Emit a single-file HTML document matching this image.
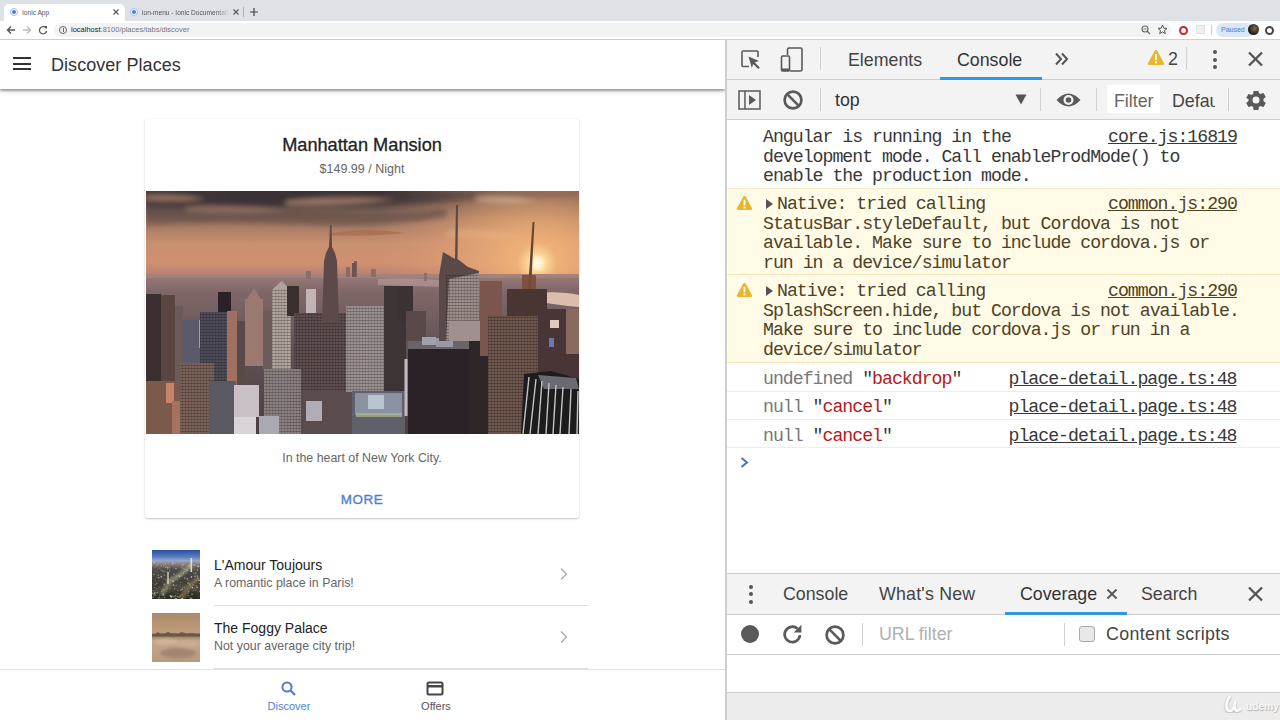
<!DOCTYPE html>
<html><head><meta charset="utf-8">
<style>
*{margin:0;padding:0;box-sizing:border-box}
html,body{width:1280px;height:720px;overflow:hidden;background:#fff;font-family:"Liberation Sans",sans-serif;position:relative}
.a{position:absolute}
.t{position:absolute;white-space:nowrap;line-height:1}
.mono{font-family:"Liberation Mono",monospace}
</style></head><body>

<!-- CHROME TAB STRIP -->
<div class="a" style="left:0;top:0;width:1280px;height:21px;background:#dee1e6"></div>
<div class="a" style="left:4px;top:4px;width:121px;height:18px;background:#fff;border-radius:5px 5px 0 0"></div>
<div class="a" style="left:10px;top:8px;width:8px;height:8px;border-radius:50%;border:1.5px solid #9ec0f5;background:#fff"></div>
<div class="a" style="left:12px;top:10px;width:4px;height:4px;border-radius:50%;background:#4a7ad8"></div>
<div class="t" style="left:22px;top:9.5px;font-size:6.6px;color:#555">Ionic App</div>
<svg class="a" style="left:113px;top:9px" width="6" height="6" viewBox="0 0 6 6"><path d="M.5 .5 L5.5 5.5 M5.5 .5 L.5 5.5" stroke="#555" stroke-width="1.1"/></svg>
<div class="a" style="left:130px;top:8px;width:8px;height:8px;border-radius:50%;border:1.5px solid #9ec0f5;background:#fff"></div>
<div class="a" style="left:132px;top:10px;width:4px;height:4px;border-radius:50%;background:#4a7ad8"></div>
<div class="t" style="left:142px;top:9.5px;font-size:6.6px;color:#555;width:87px;overflow:hidden;-webkit-mask-image:linear-gradient(90deg,#000 85%,transparent)">ion-menu - Ionic Documentation</div>
<svg class="a" style="left:233px;top:9px" width="6" height="6" viewBox="0 0 6 6"><path d="M.5 .5 L5.5 5.5 M5.5 .5 L.5 5.5" stroke="#555" stroke-width="1.1"/></svg>
<div class="a" style="left:243px;top:7px;width:1px;height:10px;background:#b0b0b0"></div>
<svg class="a" style="left:250px;top:8px" width="8" height="8" viewBox="0 0 8 8"><path d="M4 0 V8 M0 4 H8" stroke="#444" stroke-width="1.2"/></svg>

<!-- ADDRESS BAR -->
<div class="a" style="left:0;top:21px;width:1280px;height:18px;background:#fff"></div>
<div class="a" style="left:0;top:39px;width:1280px;height:1px;background:#d0d0d0"></div>
<div class="a" style="left:54px;top:23px;width:1117px;height:14px;border-radius:7px;background:#f1f3f4"></div>
<svg class="a" style="left:6px;top:25px" width="10" height="10" viewBox="0 0 10 10"><path d="M9 5 H1.8 M5 1.5 L1.5 5 L5 8.5" fill="none" stroke="#555" stroke-width="1.4"/></svg>
<svg class="a" style="left:22px;top:25px" width="10" height="10" viewBox="0 0 10 10"><path d="M1 5 H8.2 M5 1.5 L8.5 5 L5 8.5" fill="none" stroke="#bbb" stroke-width="1.3"/></svg>
<svg class="a" style="left:38px;top:25px" width="10" height="10" viewBox="0 0 10 10"><path d="M8 3.2 A3.6 3.6 0 1 0 8.6 6" fill="none" stroke="#555" stroke-width="1.3"/><path d="M6 1 H9 V4Z" fill="#555"/></svg>
<div class="a" style="left:59px;top:26px;width:8px;height:8px;border-radius:50%;border:1px solid #666"></div>
<div class="a" style="left:62.5px;top:29px;width:1px;height:3px;background:#666"></div>
<div class="a" style="left:62.5px;top:27.6px;width:1px;height:1px;background:#666"></div>
<div class="t" style="left:71px;top:26.3px;font-size:7.5px;color:#222">localhost<span style="color:#777">:8100/places/tabs/discover</span></div>
<svg class="a" style="left:1141px;top:25px" width="10" height="10" viewBox="0 0 10 10"><circle cx="4" cy="4" r="3" fill="none" stroke="#666" stroke-width="1.1"/><path d="M6 6 L9 9" stroke="#666" stroke-width="1.3"/><path d="M2.5 4 H5.5" stroke="#666" stroke-width=".9"/></svg>
<svg class="a" style="left:1157px;top:24px" width="11" height="11" viewBox="0 0 11 11"><path d="M5.5 1 L6.8 4.2 L10 4.4 L7.5 6.5 L8.3 9.7 L5.5 7.9 L2.7 9.7 L3.5 6.5 L1 4.4 L4.2 4.2Z" fill="none" stroke="#555" stroke-width="1"/></svg>
<div class="a" style="left:1179px;top:25.5px;width:8.5px;height:9px;border-radius:50%;border:2.2px solid #c82838"></div>
<div class="a" style="left:1196px;top:25px;width:9px;height:9px;background:#f0f0f0;border:1px solid #e2e2e2"></div>
<div class="a" style="left:1211px;top:25px;width:1px;height:10px;background:#ccc"></div>
<div class="a" style="left:1216px;top:23px;width:38px;height:14px;border-radius:7px;background:#dbe6f8"></div>
<div class="t" style="left:1221px;top:26px;font-size:7px;color:#4a7ad8">Paused</div>
<div class="a" style="left:1248px;top:24px;width:11px;height:11px;border-radius:50%;background:radial-gradient(circle at 60% 40%,#8a6a48,#1a140e 70%)"></div>
<div class="a" style="left:1265px;top:25.5px;width:9px;height:9px;border-radius:50%;border:2.6px solid #444"></div>

<!-- APP -->
<div class="a" style="left:0;top:40px;width:725px;height:680px;background:#fff"></div>
<div class="a" style="left:0;top:40px;width:725px;height:48.5px;background:#fff;box-shadow:0 1.5px 2px rgba(0,0,0,.32),0 3px 6px rgba(0,0,0,.1)"></div>
<div class="a" style="left:13px;top:57px;width:18px;height:2px;background:#333"></div>
<div class="a" style="left:13px;top:63px;width:18px;height:2px;background:#333"></div>
<div class="a" style="left:13px;top:68px;width:18px;height:2px;background:#333"></div>
<div class="t" style="left:51px;top:56px;font-size:18px;letter-spacing:0.05px;color:#333">Discover Places</div>

<!-- card -->
<div class="a" style="left:145px;top:119px;width:434px;height:399px;background:#fff;border-radius:2px;box-shadow:0 1px 2px rgba(0,0,0,.22),0 0 1px rgba(0,0,0,.12)"></div>
<div class="t" style="left:145px;top:135.5px;width:434px;text-align:center;font-size:18.2px;-webkit-text-stroke:0.3px #222;color:#222">Manhattan Mansion</div>
<div class="t" style="left:145px;top:163px;width:434px;text-align:center;font-size:12.5px;color:#666">$149.99 / Night</div>
<svg class="a" style="left:146px;top:191px" width="433" height="243" viewBox="0 0 433 243">
 <defs>
  <linearGradient id="sky" x1="0" y1="0" x2="0" y2="84" gradientUnits="userSpaceOnUse">
   <stop offset="0" stop-color="#3e3436"/>
   <stop offset="0.15" stop-color="#5a4a46"/>
   <stop offset="0.38" stop-color="#a07862"/>
   <stop offset="0.62" stop-color="#c89070"/>
   <stop offset="0.86" stop-color="#d09072"/>
   <stop offset="1" stop-color="#b88070"/>
  </linearGradient>
  <radialGradient id="sun" cx="391" cy="72" r="170" gradientUnits="userSpaceOnUse">
   <stop offset="0" stop-color="#fff6d8" stop-opacity="1"/>
   <stop offset="0.04" stop-color="#ffe0a0" stop-opacity="1"/>
   <stop offset="0.12" stop-color="#f8b878" stop-opacity=".8"/>
   <stop offset="0.45" stop-color="#eaa676" stop-opacity=".55"/>
   <stop offset="1" stop-color="#d09070" stop-opacity="0"/>
  </radialGradient>
  <linearGradient id="haze" x1="0" y1="84" x2="0" y2="243" gradientUnits="userSpaceOnUse">
   <stop offset="0" stop-color="#9a7a78"/>
   <stop offset="0.1" stop-color="#806868"/>
   <stop offset="0.45" stop-color="#625256"/>
   <stop offset="1" stop-color="#4a3e42"/>
  </linearGradient>
  <pattern id="win" width="3" height="3" patternUnits="userSpaceOnUse"><rect width="3" height="1" fill="#000" opacity=".22"/><rect width="1" height="3" fill="#000" opacity=".12"/></pattern>
  <linearGradient id="topband" x1="0" y1="0" x2="433" y2="0" gradientUnits="userSpaceOnUse">
   <stop offset="0" stop-color="#3a3034" stop-opacity=".9"/>
   <stop offset="0.55" stop-color="#3a3034" stop-opacity=".8"/>
   <stop offset="0.8" stop-color="#4a3a36" stop-opacity=".35"/>
   <stop offset="1" stop-color="#5a4438" stop-opacity=".2"/>
  </linearGradient>
  <filter id="bl"><feGaussianBlur stdDeviation="0.5"/></filter>
  <filter id="bl2"><feGaussianBlur stdDeviation="2.5"/></filter>
 </defs>
 <rect width="433" height="90" fill="url(#sky)"/>
 <rect width="433" height="90" fill="url(#sun)"/>
 <g filter="url(#bl2)">
  <path d="M0 0 H433 V6 Q340 8 280 12 Q150 18 0 14Z" fill="url(#topband)"/>
  <path d="M0 12 Q100 18 200 22 Q260 24 300 18 L300 26 Q230 38 160 34 Q80 30 0 34Z" fill="#54443f" opacity=".5"/>
  <path d="M0 4 Q30 2 60 8 Q30 12 0 9Z" fill="#a8806c" opacity=".8"/>
  <path d="M40 16 Q80 12 140 20 Q90 24 40 20Z" fill="#9a7866" opacity=".7"/>
  <path d="M140 10 Q180 4 250 8 Q200 16 140 14Z" fill="#b89078" opacity=".7"/>
  <path d="M330 6 Q360 3 390 10 Q360 14 330 10Z" fill="#e8c8a8" opacity=".5"/>
  <path d="M300 40 Q340 36 380 45 Q340 50 300 45Z" fill="#f0b888" opacity=".4"/>
 </g>
 <path d="M185 42 Q220 36 260 42 Q220 46 185 44Z" fill="#a86448" opacity=".55" filter="url(#bl)"/>
 <circle cx="391" cy="72" r="6" fill="#fff8e0" filter="url(#bl2)"/>
 <!-- haze city -->
 <rect y="83" width="433" height="160" fill="url(#haze)"/>
 <g filter="url(#bl)">
 <path d="M0 83 H433 V87 H0Z" fill="#b08a80" opacity=".5"/>
 <path d="M232 88 Q270 86 300 90 L300 96 Q260 95 232 94Z" fill="#c0a0a0" opacity=".55"/>
 <path d="M390 102 Q415 100 433 104 L433 116 Q410 114 390 110Z" fill="#e6c6b6" opacity=".9"/>
 <!-- small far skyline bumps -->
 <rect x="200" y="76" width="4" height="10" fill="#8a6a66"/><rect x="208" y="70" width="3" height="16" fill="#7a5e5c"/>
 <rect x="160" y="80" width="5" height="8" fill="#8a6e6a"/><rect x="225" y="78" width="5" height="8" fill="#8a6e6a"/>
 <rect x="278" y="82" width="3" height="8" fill="#8a6e6a"/>
 <!-- left -->
 <rect x="0" y="103" width="15" height="90" fill="#3a2e2e"/>
 <rect x="15" y="104" width="14" height="88" fill="#5a4440"/>
 <rect x="29" y="115" width="8" height="75" fill="#6a5a5a"/>
 <rect x="37" y="129" width="23" height="46" fill="#5a5a6a"/>
 <rect x="53" y="129" width="7" height="28" fill="#a8a0a8"/>
 <rect x="54" y="121" width="28" height="80" fill="#4e4c58"/>
 <rect x="54" y="121" width="28" height="80" fill="url(#win)"/>
 <rect x="72" y="101" width="13" height="20" fill="#2a2428"/>
 <rect x="81" y="120" width="10" height="80" fill="#a07060"/>
 <rect x="91" y="130" width="8" height="70" fill="#5a4a4a"/>
 <rect x="99" y="108" width="18" height="67" fill="#9a7a70"/>
 <path d="M101 108 L108 97 L115 108Z" fill="#9a7a70"/>
 <rect x="117" y="120" width="9" height="60" fill="#6a5a58"/>
 <rect x="126" y="98" width="19" height="80" fill="#b0a49a"/>
 <path d="M127 98 L135.5 90 L144 98Z" fill="#b0a49a"/>
 <rect x="126" y="98" width="19" height="80" fill="url(#win)"/>
 <rect x="141" y="95" width="12" height="30" fill="#3a2e2e"/>
 <rect x="160" y="98" width="10" height="24" fill="#c0b4b4"/>
 <rect x="148" y="122" width="52" height="78" fill="#5e4e4e"/>
 <rect x="148" y="122" width="52" height="78" fill="url(#win)"/>
 <rect x="0" y="190" width="35" height="53" fill="#7a5a4e"/>
 <rect x="20" y="192" width="8" height="20" fill="#c8846a"/>
 <rect x="26" y="210" width="8" height="33" fill="#a8705e"/>
 <rect x="34" y="172" width="34" height="71" fill="#7a6258"/>
 <rect x="34" y="172" width="34" height="71" fill="url(#win)"/>
 <rect x="63" y="190" width="27" height="53" fill="#5a5860"/>
 <rect x="88" y="194" width="25" height="32" fill="#c8c0c4"/>
 <rect x="88" y="226" width="22" height="17" fill="#d8d4d8"/>
 <rect x="118" y="178" width="37" height="65" fill="#8a8080"/>
 <rect x="118" y="178" width="37" height="65" fill="url(#win)"/>
 <rect x="113" y="225" width="20" height="18" fill="#aaa8b0"/>
 <rect x="155" y="200" width="51" height="43" fill="#5a4c4e"/>
 <rect x="160" y="210" width="16" height="20" fill="#b0acb8"/>
 <!-- ESB -->
 <path d="M184 34 L185.5 34 L186 56 L189 62 L191 70 L193 132 L176 132 L178 70 L180 62 L183 56Z" fill="#5c4a4a"/>
 <rect x="206" y="72" width="4" height="14" fill="#6e5252"/>
 <!-- center gray -->
 <rect x="200" y="115" width="40" height="86" fill="#9a9090"/>
 <rect x="200" y="115" width="40" height="86" fill="url(#win)"/>
 <rect x="238" y="95" width="22" height="105" fill="#3e3436"/>
 <rect x="253" y="95" width="14" height="40" fill="#3a3032"/>
 <rect x="260" y="120" width="20" height="30" fill="#5a4a4a"/>
 <rect x="206" y="200" width="53" height="43" fill="#60606a"/>
 <rect x="209" y="202" width="47" height="22" fill="#8a92a2"/>
 <rect x="222" y="204" width="16" height="14" fill="#b8c4d0"/>
 <rect x="210" y="222" width="46" height="4" fill="#b0b890" opacity=".7"/>
 <rect x="258.5" y="168" width="3" height="57" fill="#c0bcc0"/>
 <!-- dark center right -->
 <rect x="262" y="152" width="68" height="91" fill="#2a2426"/>
 <rect x="262" y="150" width="68" height="8" fill="#6a6468"/>
 <rect x="276" y="146" width="14" height="8" fill="#a0a0aa"/>
 <rect x="290" y="147" width="17" height="9" fill="#9a9aa6"/>
 <rect x="323" y="150" width="20" height="93" fill="#2e2628"/>
 <!-- BoA -->
 <path d="M310 14 L312 14 L311.5 68 L322 76 L333 80 L333 150 L293 150 L293 85 L297 61 L309 68Z" fill="#5a4a4a"/>
 <path d="M303 88 L333 82 L333 140 L300 150Z" fill="#9c8c8a"/>
 <rect x="300" y="84" width="33" height="66" fill="url(#win)"/>
 <rect x="303" y="130" width="37" height="20" fill="#a09090"/>
 <rect x="334" y="90" width="22" height="75" fill="#7a5650"/>
 <!-- crane tower -->
 <path d="M386.5 31 L388.5 31 L385 98 L382 98Z" fill="#6a4434"/>
 <rect x="376" y="84" width="14" height="14" fill="#7a4c3a" opacity=".85"/>
 <rect x="361" y="98" width="40" height="30" fill="#4a3432"/>
 <rect x="342" y="125" width="50" height="118" fill="#6e564e"/>
 <rect x="342" y="125" width="50" height="118" fill="url(#win)"/>
 <rect x="392" y="118" width="41" height="72" fill="#4a3634"/>
 <rect x="420" y="118" width="13" height="45" fill="#8a6a60"/>
 <rect x="404" y="129" width="9" height="8" fill="#e0c8c0"/>
 <rect x="403" y="147" width="5" height="9" fill="#6a7ab0"/>
 <!-- striped building -->
 <path d="M378 183 L405 180 L433 188 V243 H375Z" fill="#1e1a1c"/>
 <path d="M392 184 L430 187 L433 198 L398 198Z" fill="#6a6a72"/>
 </g>
 <g stroke="#c4c4c8" stroke-width="1.4">
  <line x1="383" y1="186" x2="377" y2="243"/><line x1="390" y1="188" x2="384" y2="243"/>
  <line x1="396" y1="190" x2="392" y2="243"/><line x1="403" y1="192" x2="400" y2="243"/>
  <line x1="410" y1="194" x2="407" y2="243"/><line x1="417" y1="196" x2="414" y2="243"/>
  <line x1="425" y1="198" x2="423" y2="243"/><line x1="432" y1="200" x2="431" y2="243"/>
 </g>
</svg>
<div class="t" style="left:145px;top:452px;width:434px;text-align:center;font-size:12.4px;color:#666">In the heart of New York City.</div>
<div class="t" style="left:145px;top:493px;width:434px;text-align:center;font-size:13.4px;-webkit-text-stroke:0.35px #4d7fd1;letter-spacing:0.55px;color:#4d7fd1">MORE</div>

<!-- list -->
<svg class="a" style="left:152px;top:550px" width="48" height="49" viewBox="0 0 48 49">
 <defs><linearGradient id="p1" x1="0" y1="0" x2="0" y2="1">
  <stop offset="0" stop-color="#2a50a0"/><stop offset=".14" stop-color="#5a7cc0"/><stop offset=".22" stop-color="#9aa8c8"/><stop offset=".28" stop-color="#8a8088"/><stop offset=".4" stop-color="#4e4c48"/><stop offset="1" stop-color="#2e2c28"/></linearGradient>
  <filter id="pb"><feGaussianBlur stdDeviation="0.45"/></filter>
  <filter id="pb2"><feGaussianBlur stdDeviation="1.2"/></filter></defs>
 <rect width="48" height="49" fill="url(#p1)"/>
 <g filter="url(#pb2)">
  <path d="M8 44 L16 30 L28 22 L38 14 L41 17 L30 26 L19 34 L12 46Z" fill="#c8d0a8" opacity=".45"/>
  <path d="M26 48 L36 34 L46 26 L48 30 L40 36 L32 49Z" fill="#c8a060" opacity=".4"/>
  <path d="M0 40 Q20 30 48 36 L48 42 Q20 38 0 46Z" fill="#707060" opacity=".35"/>
 </g>
 <g filter="url(#pb)"><circle cx="15.5" cy="17.6" r="0.6" fill="#e8e0a0" opacity="0.76"/><circle cx="4.5" cy="33.6" r="0.8" fill="#f0e8c0" opacity="0.37"/><circle cx="20.8" cy="14.6" r="0.3" fill="#ffffff" opacity="0.38"/><circle cx="27.1" cy="47.1" r="0.6" fill="#b0c0a0" opacity="0.82"/><circle cx="27.7" cy="26.7" r="0.8" fill="#e8e0a0" opacity="0.63"/><circle cx="6.4" cy="27.5" r="0.6" fill="#b0c0a0" opacity="0.50"/><circle cx="39.2" cy="18.7" r="0.6" fill="#d0a060" opacity="0.44"/><circle cx="4.7" cy="38.3" r="0.6" fill="#b0c0a0" opacity="0.45"/><circle cx="32.7" cy="27.8" r="0.5" fill="#b0c0a0" opacity="0.81"/><circle cx="17.4" cy="21.2" r="0.4" fill="#f0e8c0" opacity="0.39"/><circle cx="14.4" cy="30.3" r="0.5" fill="#ffffff" opacity="0.49"/><circle cx="47.0" cy="16.4" r="0.5" fill="#c8b070" opacity="0.43"/><circle cx="23.5" cy="13.5" r="0.6" fill="#b0c0a0" opacity="0.64"/><circle cx="42.0" cy="23.6" r="0.6" fill="#b0c0a0" opacity="0.60"/><circle cx="38.3" cy="14.5" r="0.3" fill="#c8b070" opacity="0.59"/><circle cx="31.9" cy="14.2" r="0.7" fill="#d0a060" opacity="0.64"/><circle cx="32.7" cy="28.5" r="0.7" fill="#d0a060" opacity="0.52"/><circle cx="45.2" cy="25.2" r="0.6" fill="#ffffff" opacity="0.38"/><circle cx="36.9" cy="16.8" r="0.4" fill="#ffffff" opacity="0.81"/><circle cx="23.8" cy="18.2" r="0.5" fill="#c8b070" opacity="0.79"/><circle cx="39.3" cy="44.0" r="0.4" fill="#ffffff" opacity="0.84"/><circle cx="32.8" cy="26.1" r="0.4" fill="#e8e0a0" opacity="0.44"/><circle cx="11.1" cy="20.6" r="0.5" fill="#b0c0a0" opacity="0.44"/><circle cx="13.5" cy="17.4" r="0.6" fill="#b0c0a0" opacity="0.63"/><circle cx="45.7" cy="37.5" r="0.6" fill="#b0c0a0" opacity="0.68"/><circle cx="35.5" cy="28.9" r="0.7" fill="#d0a060" opacity="0.75"/><circle cx="18.8" cy="26.8" r="0.4" fill="#d0a060" opacity="0.55"/><circle cx="9.1" cy="48.4" r="0.5" fill="#e8e0a0" opacity="0.52"/><circle cx="2.5" cy="12.0" r="0.4" fill="#e8e0a0" opacity="0.82"/><circle cx="29.5" cy="14.6" r="0.4" fill="#ffffff" opacity="0.42"/><circle cx="12.1" cy="24.9" r="0.5" fill="#e8e0a0" opacity="0.41"/><circle cx="23.4" cy="48.2" r="0.5" fill="#c8b070" opacity="0.39"/><circle cx="4.9" cy="24.7" r="0.4" fill="#d0a060" opacity="0.43"/><circle cx="1.1" cy="47.2" r="0.6" fill="#f0e8c0" opacity="0.70"/><circle cx="43.9" cy="40.1" r="0.4" fill="#d0a060" opacity="0.78"/><circle cx="33.4" cy="21.7" r="0.5" fill="#f0e8c0" opacity="0.53"/><circle cx="10.7" cy="32.0" r="0.6" fill="#d0a060" opacity="0.46"/><circle cx="39.0" cy="48.4" r="0.7" fill="#f0e8c0" opacity="0.76"/><circle cx="35.5" cy="20.4" r="0.6" fill="#c8b070" opacity="0.72"/><circle cx="47.5" cy="41.2" r="0.5" fill="#f0e8c0" opacity="0.70"/><circle cx="45.9" cy="28.5" r="0.8" fill="#c8b070" opacity="0.83"/><circle cx="17.5" cy="20.2" r="0.4" fill="#f0e8c0" opacity="0.52"/><circle cx="23.2" cy="48.5" r="0.6" fill="#e8e0a0" opacity="0.59"/><circle cx="31.3" cy="41.6" r="0.3" fill="#d0a060" opacity="0.41"/><circle cx="18.6" cy="38.3" r="0.4" fill="#f0e8c0" opacity="0.57"/><circle cx="30.5" cy="15.2" r="0.8" fill="#d0a060" opacity="0.55"/><circle cx="19.3" cy="47.0" r="0.7" fill="#f0e8c0" opacity="0.85"/><circle cx="1.3" cy="33.9" r="0.5" fill="#d0a060" opacity="0.42"/><circle cx="39.7" cy="48.3" r="0.6" fill="#c8b070" opacity="0.43"/><circle cx="26.3" cy="12.8" r="0.7" fill="#d0a060" opacity="0.67"/><circle cx="25.3" cy="46.5" r="0.5" fill="#f0e8c0" opacity="0.76"/><circle cx="10.1" cy="21.3" r="0.4" fill="#f0e8c0" opacity="0.73"/><circle cx="15.6" cy="32.1" r="0.7" fill="#e8e0a0" opacity="0.81"/><circle cx="17.0" cy="29.0" r="0.6" fill="#b0c0a0" opacity="0.56"/><circle cx="44.1" cy="30.6" r="0.6" fill="#b0c0a0" opacity="0.61"/><circle cx="41.9" cy="40.7" r="0.6" fill="#f0e8c0" opacity="0.44"/><circle cx="22.7" cy="38.8" r="0.6" fill="#c8b070" opacity="0.69"/><circle cx="25.5" cy="29.9" r="0.7" fill="#b0c0a0" opacity="0.38"/><circle cx="9.2" cy="13.6" r="0.3" fill="#ffffff" opacity="0.63"/><circle cx="36.5" cy="45.8" r="0.5" fill="#b0c0a0" opacity="0.84"/><circle cx="29.1" cy="19.4" r="0.4" fill="#b0c0a0" opacity="0.62"/><circle cx="22.9" cy="46.8" r="0.6" fill="#c8b070" opacity="0.81"/><circle cx="42.9" cy="19.5" r="0.5" fill="#ffffff" opacity="0.41"/><circle cx="21.2" cy="14.7" r="0.4" fill="#e8e0a0" opacity="0.46"/><circle cx="14.5" cy="16.5" r="0.7" fill="#d0a060" opacity="0.67"/><circle cx="17.6" cy="21.4" r="0.4" fill="#ffffff" opacity="0.46"/><circle cx="45.7" cy="26.7" r="0.5" fill="#d0a060" opacity="0.77"/><circle cx="7.8" cy="28.0" r="0.6" fill="#c8b070" opacity="0.56"/><circle cx="17.1" cy="15.4" r="0.5" fill="#c8b070" opacity="0.63"/><circle cx="21.1" cy="12.7" r="0.5" fill="#b0c0a0" opacity="0.50"/><circle cx="46.1" cy="16.2" r="0.8" fill="#f0e8c0" opacity="0.84"/><circle cx="5.0" cy="21.8" r="0.3" fill="#f0e8c0" opacity="0.49"/><circle cx="6.2" cy="27.6" r="0.8" fill="#c8b070" opacity="0.55"/><circle cx="25.8" cy="31.0" r="0.5" fill="#c8b070" opacity="0.39"/><circle cx="2.8" cy="37.5" r="0.5" fill="#e8e0a0" opacity="0.48"/><circle cx="0.8" cy="15.3" r="0.4" fill="#b0c0a0" opacity="0.78"/><circle cx="3.2" cy="43.9" r="0.5" fill="#c8b070" opacity="0.85"/><circle cx="20.1" cy="45.9" r="0.6" fill="#e8e0a0" opacity="0.61"/><circle cx="11.4" cy="16.0" r="0.4" fill="#e8e0a0" opacity="0.44"/><circle cx="44.7" cy="35.3" r="0.6" fill="#f0e8c0" opacity="0.49"/><circle cx="24.0" cy="18.6" r="0.5" fill="#e8e0a0" opacity="0.85"/><circle cx="1.8" cy="12.7" r="0.6" fill="#f0e8c0" opacity="0.61"/><circle cx="11.8" cy="28.5" r="0.6" fill="#d0a060" opacity="0.57"/><circle cx="23.8" cy="42.9" r="0.5" fill="#b0c0a0" opacity="0.50"/><circle cx="10.3" cy="20.5" r="0.4" fill="#d0a060" opacity="0.71"/><circle cx="6.7" cy="48.6" r="0.8" fill="#f0e8c0" opacity="0.36"/><circle cx="30.0" cy="44.6" r="0.5" fill="#e8e0a0" opacity="0.39"/><circle cx="40.4" cy="44.2" r="0.6" fill="#c8b070" opacity="0.65"/><circle cx="33.2" cy="13.7" r="0.4" fill="#c8b070" opacity="0.57"/><circle cx="12.6" cy="47.6" r="0.8" fill="#b0c0a0" opacity="0.51"/><circle cx="1.7" cy="44.6" r="0.4" fill="#f0e8c0" opacity="0.35"/><circle cx="18.3" cy="29.6" r="0.6" fill="#f0e8c0" opacity="0.47"/><circle cx="37.3" cy="15.4" r="0.7" fill="#f0e8c0" opacity="0.55"/><circle cx="2.0" cy="12.8" r="0.5" fill="#f0e8c0" opacity="0.39"/><circle cx="46.0" cy="43.6" r="0.4" fill="#d0a060" opacity="0.74"/><circle cx="28.6" cy="40.3" r="0.7" fill="#ffffff" opacity="0.42"/><circle cx="34.8" cy="35.8" r="0.3" fill="#d0a060" opacity="0.80"/><circle cx="30.1" cy="39.2" r="0.7" fill="#f0e8c0" opacity="0.80"/><circle cx="36.1" cy="33.0" r="0.7" fill="#e8e0a0" opacity="0.76"/><circle cx="28.0" cy="45.0" r="0.6" fill="#d0a060" opacity="0.67"/><circle cx="4.1" cy="13.5" r="0.6" fill="#e8e0a0" opacity="0.54"/><circle cx="21.7" cy="13.9" r="0.3" fill="#b0c0a0" opacity="0.69"/><circle cx="23.5" cy="12.1" r="0.7" fill="#d0a060" opacity="0.82"/><circle cx="43.1" cy="15.4" r="0.6" fill="#d0a060" opacity="0.72"/><circle cx="12.1" cy="14.8" r="0.4" fill="#d0a060" opacity="0.73"/><circle cx="11.1" cy="36.0" r="0.5" fill="#ffffff" opacity="0.39"/><circle cx="43.7" cy="22.6" r="0.3" fill="#d0a060" opacity="0.67"/><circle cx="3.7" cy="17.5" r="0.4" fill="#d0a060" opacity="0.70"/><circle cx="29.8" cy="16.9" r="0.5" fill="#ffffff" opacity="0.48"/><circle cx="32.3" cy="37.6" r="0.6" fill="#c8b070" opacity="0.70"/><circle cx="13.7" cy="29.2" r="0.7" fill="#b0c0a0" opacity="0.45"/><circle cx="47.0" cy="46.6" r="0.3" fill="#ffffff" opacity="0.39"/><circle cx="24.3" cy="48.8" r="0.8" fill="#ffffff" opacity="0.45"/><circle cx="45.4" cy="19.8" r="0.6" fill="#f0e8c0" opacity="0.72"/><circle cx="12.6" cy="25.3" r="0.6" fill="#d0a060" opacity="0.60"/><circle cx="42.6" cy="38.0" r="0.4" fill="#ffffff" opacity="0.55"/><circle cx="7.6" cy="47.1" r="0.6" fill="#ffffff" opacity="0.50"/><circle cx="6.8" cy="24.7" r="0.5" fill="#c8b070" opacity="0.35"/><circle cx="36.0" cy="43.0" r="0.4" fill="#f0e8c0" opacity="0.71"/><circle cx="43.3" cy="22.7" r="0.5" fill="#ffffff" opacity="0.55"/><circle cx="41.8" cy="14.8" r="0.8" fill="#c8b070" opacity="0.78"/><circle cx="13.5" cy="13.9" r="0.6" fill="#d0a060" opacity="0.82"/><circle cx="12.0" cy="21.8" r="0.6" fill="#f0e8c0" opacity="0.74"/><circle cx="37.7" cy="27.8" r="0.3" fill="#d0a060" opacity="0.55"/><circle cx="42.0" cy="32.5" r="0.4" fill="#e8e0a0" opacity="0.37"/><circle cx="35.2" cy="28.7" r="0.7" fill="#d0a060" opacity="0.78"/><circle cx="23.3" cy="45.7" r="0.6" fill="#f0e8c0" opacity="0.59"/><circle cx="16.5" cy="23.0" r="0.7" fill="#d0a060" opacity="0.48"/><circle cx="31.5" cy="23.1" r="0.6" fill="#ffffff" opacity="0.41"/><circle cx="30.9" cy="14.8" r="0.6" fill="#ffffff" opacity="0.63"/><circle cx="21.7" cy="24.3" r="0.7" fill="#ffffff" opacity="0.42"/><circle cx="9.2" cy="15.4" r="0.5" fill="#e8e0a0" opacity="0.51"/><circle cx="17.7" cy="41.9" r="0.4" fill="#e8e0a0" opacity="0.72"/><circle cx="19.8" cy="27.3" r="0.6" fill="#ffffff" opacity="0.49"/><circle cx="36.1" cy="30.4" r="0.6" fill="#c8b070" opacity="0.41"/><circle cx="24.2" cy="35.3" r="0.7" fill="#f0e8c0" opacity="0.40"/><circle cx="43.0" cy="26.2" r="0.6" fill="#ffffff" opacity="0.83"/><circle cx="40.7" cy="44.3" r="0.3" fill="#e8e0a0" opacity="0.56"/><circle cx="36.7" cy="41.8" r="0.8" fill="#ffffff" opacity="0.35"/><circle cx="18.8" cy="46.3" r="0.7" fill="#ffffff" opacity="0.84"/><circle cx="11.9" cy="16.0" r="0.4" fill="#b0c0a0" opacity="0.84"/><circle cx="5.2" cy="42.5" r="0.7" fill="#ffffff" opacity="0.39"/><circle cx="37.3" cy="12.1" r="0.4" fill="#b0c0a0" opacity="0.81"/><circle cx="31.0" cy="23.2" r="0.4" fill="#c8b070" opacity="0.61"/><circle cx="21.0" cy="40.3" r="0.3" fill="#c8b070" opacity="0.61"/><circle cx="28.0" cy="26.4" r="0.4" fill="#b0c0a0" opacity="0.35"/><circle cx="25.8" cy="48.9" r="0.4" fill="#c8b070" opacity="0.67"/><circle cx="42.4" cy="29.6" r="0.4" fill="#f0e8c0" opacity="0.36"/><circle cx="19.8" cy="36.0" r="0.3" fill="#f0e8c0" opacity="0.60"/><circle cx="32.4" cy="27.5" r="0.4" fill="#d0a060" opacity="0.56"/><circle cx="17.8" cy="30.2" r="0.6" fill="#d0a060" opacity="0.56"/><circle cx="32.8" cy="19.3" r="0.7" fill="#d0a060" opacity="0.77"/><circle cx="3.2" cy="30.3" r="0.4" fill="#f0e8c0" opacity="0.47"/><circle cx="10.6" cy="40.1" r="0.4" fill="#b0c0a0" opacity="0.60"/><circle cx="9.0" cy="20.3" r="0.5" fill="#d0a060" opacity="0.38"/><circle cx="28.6" cy="46.1" r="0.3" fill="#e8e0a0" opacity="0.84"/><circle cx="6.8" cy="13.9" r="0.3" fill="#ffffff" opacity="0.57"/><circle cx="34.2" cy="23.6" r="0.4" fill="#e8e0a0" opacity="0.82"/><circle cx="15.8" cy="18.9" r="0.8" fill="#d0a060" opacity="0.58"/><circle cx="15.0" cy="38.8" r="0.7" fill="#c8b070" opacity="0.57"/><circle cx="5.2" cy="14.9" r="0.3" fill="#ffffff" opacity="0.83"/><circle cx="5.9" cy="47.7" r="0.4" fill="#c8b070" opacity="0.73"/><circle cx="14.8" cy="41.7" r="0.3" fill="#d0a060" opacity="0.59"/><circle cx="17.9" cy="46.0" r="0.4" fill="#c8b070" opacity="0.72"/><circle cx="22.8" cy="35.4" r="0.4" fill="#d0a060" opacity="0.73"/><circle cx="2.0" cy="13.3" r="0.3" fill="#e8e0a0" opacity="0.48"/><circle cx="35.9" cy="45.2" r="0.5" fill="#c8b070" opacity="0.52"/><circle cx="45.8" cy="13.6" r="0.7" fill="#d0a060" opacity="0.51"/><circle cx="13.2" cy="12.1" r="0.7" fill="#d0a060" opacity="0.82"/><circle cx="3.1" cy="42.6" r="0.4" fill="#d0a060" opacity="0.83"/><circle cx="45.8" cy="26.3" r="0.4" fill="#ffffff" opacity="0.76"/><circle cx="6.4" cy="30.4" r="0.3" fill="#d0a060" opacity="0.50"/><circle cx="33.2" cy="17.6" r="0.4" fill="#c8b070" opacity="0.58"/><circle cx="37.6" cy="34.0" r="0.6" fill="#ffffff" opacity="0.73"/><circle cx="11.9" cy="14.4" r="0.3" fill="#b0c0a0" opacity="0.62"/><circle cx="7.7" cy="27.8" r="0.4" fill="#e8e0a0" opacity="0.48"/><circle cx="4.0" cy="15.6" r="0.5" fill="#d0a060" opacity="0.84"/><circle cx="8.3" cy="16.9" r="0.5" fill="#d0a060" opacity="0.47"/><circle cx="25.9" cy="40.6" r="0.7" fill="#c8b070" opacity="0.50"/><circle cx="27.2" cy="25.8" r="0.7" fill="#f0e8c0" opacity="0.57"/><circle cx="8.9" cy="20.7" r="0.4" fill="#b0c0a0" opacity="0.44"/><circle cx="3.1" cy="21.3" r="0.4" fill="#b0c0a0" opacity="0.47"/><circle cx="38.8" cy="36.2" r="0.8" fill="#e8e0a0" opacity="0.35"/><circle cx="42.4" cy="20.6" r="0.5" fill="#c8b070" opacity="0.37"/><circle cx="14.1" cy="16.4" r="0.4" fill="#b0c0a0" opacity="0.45"/><circle cx="3.6" cy="31.0" r="0.4" fill="#b0c0a0" opacity="0.48"/><circle cx="37.3" cy="47.0" r="0.4" fill="#b0c0a0" opacity="0.70"/><circle cx="16.8" cy="13.4" r="0.5" fill="#e8e0a0" opacity="0.45"/><circle cx="12.2" cy="34.2" r="0.6" fill="#f0e8c0" opacity="0.76"/><circle cx="39.3" cy="27.1" r="0.5" fill="#b0c0a0" opacity="0.51"/><circle cx="9.8" cy="41.4" r="0.6" fill="#e8e0a0" opacity="0.55"/><circle cx="38.2" cy="36.6" r="0.4" fill="#b0c0a0" opacity="0.40"/><circle cx="7.9" cy="37.7" r="0.5" fill="#c8b070" opacity="0.68"/><circle cx="20.1" cy="13.9" r="0.7" fill="#c8b070" opacity="0.56"/><circle cx="0.9" cy="40.4" r="0.7" fill="#d0a060" opacity="0.45"/><circle cx="34.9" cy="19.5" r="0.3" fill="#f0e8c0" opacity="0.56"/><circle cx="39.4" cy="27.0" r="0.7" fill="#ffffff" opacity="0.74"/><circle cx="6.2" cy="13.9" r="0.4" fill="#ffffff" opacity="0.39"/><circle cx="29.9" cy="25.7" r="0.6" fill="#f0e8c0" opacity="0.52"/><circle cx="7.8" cy="18.4" r="0.3" fill="#ffffff" opacity="0.60"/><circle cx="38.6" cy="47.8" r="0.4" fill="#f0e8c0" opacity="0.77"/><circle cx="2.1" cy="45.8" r="0.5" fill="#b0c0a0" opacity="0.81"/><circle cx="18.6" cy="45.5" r="0.6" fill="#f0e8c0" opacity="0.67"/><circle cx="41.1" cy="35.0" r="0.6" fill="#f0e8c0" opacity="0.76"/><circle cx="8.8" cy="20.1" r="0.5" fill="#b0c0a0" opacity="0.43"/><circle cx="17.2" cy="17.5" r="0.8" fill="#f0e8c0" opacity="0.37"/><circle cx="27.0" cy="40.0" r="0.3" fill="#c8b070" opacity="0.41"/><circle cx="28.8" cy="32.4" r="0.6" fill="#c8b070" opacity="0.67"/><circle cx="14.8" cy="21.2" r="0.5" fill="#c8b070" opacity="0.57"/><circle cx="21.0" cy="12.9" r="0.6" fill="#ffffff" opacity="0.58"/><circle cx="21.4" cy="34.9" r="0.7" fill="#f0e8c0" opacity="0.76"/><circle cx="19.2" cy="14.5" r="0.5" fill="#c8b070" opacity="0.40"/><circle cx="21.2" cy="30.9" r="0.3" fill="#d0a060" opacity="0.42"/><circle cx="44.3" cy="23.6" r="0.7" fill="#e8e0a0" opacity="0.38"/><circle cx="24.2" cy="26.0" r="0.8" fill="#f0e8c0" opacity="0.36"/><circle cx="3.2" cy="34.7" r="0.6" fill="#e8e0a0" opacity="0.45"/><circle cx="47.1" cy="30.2" r="0.8" fill="#f0e8c0" opacity="0.69"/><circle cx="34.6" cy="20.2" r="0.7" fill="#b0c0a0" opacity="0.73"/><circle cx="7.6" cy="45.2" r="0.4" fill="#ffffff" opacity="0.42"/><circle cx="24.1" cy="46.0" r="0.4" fill="#c8b070" opacity="0.66"/><circle cx="11.4" cy="25.8" r="0.4" fill="#ffffff" opacity="0.43"/><circle cx="44.9" cy="37.1" r="0.7" fill="#f0e8c0" opacity="0.75"/><circle cx="12.7" cy="40.4" r="0.3" fill="#c8b070" opacity="0.83"/><circle cx="21.7" cy="31.3" r="0.6" fill="#e8e0a0" opacity="0.48"/><circle cx="25.7" cy="43.7" r="0.7" fill="#c8b070" opacity="0.48"/><circle cx="47.5" cy="33.4" r="0.5" fill="#e8e0a0" opacity="0.57"/><circle cx="8.5" cy="39.5" r="0.3" fill="#b0c0a0" opacity="0.48"/><circle cx="30.7" cy="48.4" r="0.6" fill="#d0a060" opacity="0.80"/><circle cx="35.2" cy="39.6" r="0.4" fill="#c8b070" opacity="0.66"/><circle cx="20.7" cy="31.0" r="0.7" fill="#f0e8c0" opacity="0.59"/><circle cx="29.4" cy="13.7" r="0.3" fill="#b0c0a0" opacity="0.53"/><circle cx="5.1" cy="25.2" r="0.4" fill="#b0c0a0" opacity="0.50"/><circle cx="6.4" cy="25.6" r="0.7" fill="#f0e8c0" opacity="0.42"/><circle cx="45.0" cy="21.0" r="0.4" fill="#e8e0a0" opacity="0.38"/><circle cx="6.9" cy="36.6" r="0.4" fill="#c8b070" opacity="0.83"/><circle cx="2.7" cy="42.4" r="0.7" fill="#b0c0a0" opacity="0.67"/><circle cx="21.3" cy="46.7" r="0.7" fill="#f0e8c0" opacity="0.43"/><circle cx="0.0" cy="14.3" r="0.3" fill="#f0e8c0" opacity="0.47"/><circle cx="2.8" cy="40.8" r="0.3" fill="#b0c0a0" opacity="0.68"/><circle cx="9.5" cy="27.3" r="0.6" fill="#d0a060" opacity="0.60"/><circle cx="30.8" cy="42.1" r="0.4" fill="#c8b070" opacity="0.38"/><circle cx="30.0" cy="48.8" r="0.7" fill="#ffffff" opacity="0.71"/><circle cx="0.3" cy="43.2" r="0.7" fill="#ffffff" opacity="0.39"/><circle cx="31.5" cy="18.5" r="0.8" fill="#c8b070" opacity="0.47"/><circle cx="1.9" cy="24.4" r="0.7" fill="#d0a060" opacity="0.82"/><circle cx="12.6" cy="13.9" r="0.6" fill="#d0a060" opacity="0.57"/><circle cx="37.8" cy="31.4" r="0.4" fill="#d0a060" opacity="0.81"/><circle cx="42.9" cy="15.2" r="0.6" fill="#f0e8c0" opacity="0.48"/><circle cx="11.3" cy="39.5" r="0.8" fill="#d0a060" opacity="0.81"/><circle cx="9.2" cy="26.4" r="0.6" fill="#ffffff" opacity="0.80"/><circle cx="30.3" cy="37.6" r="0.6" fill="#b0c0a0" opacity="0.58"/><circle cx="40.3" cy="37.8" r="0.7" fill="#ffffff" opacity="0.83"/><circle cx="11.2" cy="44.7" r="0.7" fill="#ffffff" opacity="0.66"/><circle cx="3.7" cy="45.7" r="0.4" fill="#e8e0a0" opacity="0.41"/><circle cx="29.9" cy="18.0" r="0.8" fill="#d0a060" opacity="0.36"/><circle cx="2.0" cy="37.6" r="0.6" fill="#d0a060" opacity="0.38"/><circle cx="2.2" cy="43.7" r="0.7" fill="#f0e8c0" opacity="0.76"/><circle cx="39.3" cy="45.0" r="0.3" fill="#d0a060" opacity="0.82"/><circle cx="5.1" cy="19.6" r="0.4" fill="#e8e0a0" opacity="0.82"/><circle cx="43.7" cy="39.9" r="0.3" fill="#d0a060" opacity="0.67"/>
 <rect x="38.5" y="8" width="1.6" height="14" fill="#f4f0c8" opacity=".85"/>
 <rect x="15" y="22" width="2" height="12" fill="#e8e8d0" opacity=".6"/>
 </g>
</svg>
<div class="t" style="left:214px;top:558px;font-size:14px;color:#222">L'Amour Toujours</div>
<div class="t" style="left:214px;top:577px;font-size:12.4px;color:#666">A romantic place in Paris!</div>
<div class="a" style="left:214px;top:605px;width:374px;height:1px;background:#dedede"></div>

<svg class="a" style="left:152px;top:613px" width="48" height="49" viewBox="0 0 48 49">
 <defs><linearGradient id="p2" x1="0" y1="0" x2="0" y2="1">
  <stop offset="0" stop-color="#aa8a6a"/><stop offset=".4" stop-color="#c09c7a"/><stop offset=".47" stop-color="#9a7e62"/><stop offset=".56" stop-color="#c4a68a"/><stop offset="1" stop-color="#b89a80"/></linearGradient>
  <filter id="fb"><feGaussianBlur stdDeviation="1.5"/></filter><filter id="fb2"><feGaussianBlur stdDeviation="0.5"/></filter></defs>
 <rect width="48" height="49" fill="url(#p2)"/>
 <g filter="url(#fb2)">
 <path d="M0 21 L4 20.5 L6 19 L8 20.5 L14 20 L16 18.5 L18 20 L26 20.5 L30 19 L34 20.5 L40 20 L44 20.5 L48 20.5 L48 23.5 L0 23.5Z" fill="#4a3e32" opacity=".65"/>
 </g>
 <g filter="url(#fb)">
 <ellipse cx="26" cy="40" rx="18" ry="5" fill="#8a7060" opacity=".55"/>
 <ellipse cx="14" cy="29" rx="12" ry="3" fill="#d8c0a8" opacity=".6"/>
 <ellipse cx="36" cy="31" rx="12" ry="3" fill="#d0b8a0" opacity=".5"/>
 </g>
</svg>
<div class="t" style="left:214px;top:621px;font-size:14px;color:#222">The Foggy Palace</div>
<div class="t" style="left:214px;top:640px;font-size:12.4px;color:#666">Not your average city trip!</div>
<div class="a" style="left:214px;top:668px;width:374px;height:1px;background:#dedede"></div>

<svg class="a" style="left:558px;top:567px" width="12" height="14" viewBox="0 0 12 14"><path d="M3 1.5 L8.5 7 L3 12.5" fill="none" stroke="#aaa" stroke-width="1.3"/></svg>
<svg class="a" style="left:558px;top:630px" width="12" height="14" viewBox="0 0 12 14"><path d="M3 1.5 L8.5 7 L3 12.5" fill="none" stroke="#aaa" stroke-width="1.3"/></svg>

<!-- tabbar -->
<div class="a" style="left:0;top:669px;width:725px;height:1px;background:#e2e2e2"></div>
<div class="a" style="left:0;top:670px;width:725px;height:50px;background:#fff"></div>
<svg class="a" style="left:280px;top:680px" width="18" height="18" viewBox="0 0 18 18"><circle cx="7" cy="7" r="4.6" fill="none" stroke="#4d7fd1" stroke-width="2"/><path d="M10.3 10.3 L15 15" stroke="#4d7fd1" stroke-width="2.2"/></svg>
<div class="t" style="left:240px;top:700.5px;width:98px;text-align:center;font-size:11px;color:#4d7fd1">Discover</div>
<svg class="a" style="left:426px;top:681px" width="18" height="15" viewBox="0 0 18 15"><rect x="1.5" x2="0" y="1.5" width="15" height="12" rx="1.5" fill="none" stroke="#444" stroke-width="2"/><rect x="1.5" y="4" width="15" height="2.5" fill="#444"/></svg>
<div class="t" style="left:387px;top:700.5px;width:98px;text-align:center;font-size:11px;color:#555">Offers</div>



<!-- DEVTOOLS -->
<div class="a" style="left:726px;top:40px;width:554px;height:680px;background:#fff"></div>
<!-- main toolbar -->
<div class="a" style="left:726px;top:40px;width:554px;height:39px;background:#f3f3f3"></div>
<div class="a" style="left:726px;top:79px;width:554px;height:1px;background:#cdcdcd"></div>
<svg class="a" style="left:740px;top:49px" width="24" height="22" viewBox="0 0 24 22">
 <path d="M9 17.5 H3 Q2 17.5 2 16.5 V3 Q2 2 3 2 H17 Q18 2 18 3 V8" fill="none" stroke="#5a5a5a" stroke-width="1.6"/>
 <path d="M8.5 7.5 L19 12 L14.8 13.4 L19.8 18.4 L18.2 20 L13.2 15 L11.8 19Z" fill="#5a5a5a"/>
</svg>
<svg class="a" style="left:779px;top:46px" width="25" height="27" viewBox="0 0 25 27">
 <path d="M8.5 9 V3.5 Q8.5 2 10 2 H21.5 Q23 2 23 3.5 V23.5 Q23 25 21.5 25 H11" fill="none" stroke="#5a5a5a" stroke-width="1.6"/>
 <rect x="2.5" y="10" width="8" height="15" rx="1.2" fill="none" stroke="#5a5a5a" stroke-width="1.6"/>
 <rect x="2.5" y="22.5" width="8" height="2.6" fill="#5a5a5a"/>
</svg>
<div class="a" style="left:820px;top:47px;width:1px;height:23px;background:#cfcfcf"></div>
<div class="t" style="left:848px;top:51.5px;font-size:17.8px;color:#444">Elements</div>
<div class="t" style="left:957px;top:51.5px;font-size:17.8px;color:#333">Console</div>
<div class="a" style="left:940px;top:77px;width:102px;height:3px;background:#2e97dd"></div>
<svg class="a" style="left:1054px;top:51px" width="16" height="16" viewBox="0 0 16 16">
 <path d="M2 2.5 L7 8 L2 13.5 M8 2.5 L13 8 L8 13.5" fill="none" stroke="#555" stroke-width="2"/>
</svg>
<svg class="a" style="left:1147px;top:49px" width="18" height="17" viewBox="0 0 18 17">
 <path d="M9 1 Q9.8 1 10.3 1.8 L17 14.3 Q17.5 15.8 16 16 H2 Q0.5 15.8 1 14.3 L7.7 1.8 Q8.2 1 9 1Z" fill="#e9b52b"/>
 <rect x="8" y="5" width="2" height="6" fill="#fff"/><rect x="8" y="12.3" width="2" height="2" fill="#fff"/>
</svg>
<div class="t" style="left:1168px;top:51px;font-size:17.8px;color:#444">2</div>
<div class="a" style="left:1186px;top:47px;width:1px;height:23px;background:#cfcfcf"></div>
<div class="a" style="left:1213px;top:50px;width:4px;height:4px;border-radius:50%;background:#555"></div>
<div class="a" style="left:1213px;top:58px;width:4px;height:4px;border-radius:50%;background:#555"></div>
<div class="a" style="left:1213px;top:65px;width:4px;height:4px;border-radius:50%;background:#555"></div>
<svg class="a" style="left:1247px;top:51px" width="17" height="16" viewBox="0 0 17 16">
 <path d="M2 1.5 L15 14.5 M15 1.5 L2 14.5" stroke="#555" stroke-width="2.3"/>
</svg>

<!-- console toolbar -->
<div class="a" style="left:726px;top:80px;width:554px;height:39px;background:#f3f3f3"></div>
<div class="a" style="left:726px;top:119px;width:554px;height:1px;background:#cdcdcd"></div>
<svg class="a" style="left:737px;top:89px" width="25" height="22" viewBox="0 0 25 22">
 <rect x="2" y="2" width="21" height="18" fill="none" stroke="#5a5a5a" stroke-width="1.5"/>
 <rect x="7.2" y="2" width="1.5" height="18" fill="#5a5a5a"/>
 <path d="M12 6 L19 11 L12 16Z" fill="#5a5a5a"/>
</svg>
<svg class="a" style="left:782px;top:89px" width="22" height="22" viewBox="0 0 22 22">
 <circle cx="11" cy="11" r="8.4" fill="none" stroke="#5a5a5a" stroke-width="2.7"/>
 <path d="M5.2 5.2 L16.8 16.8" stroke="#5a5a5a" stroke-width="2.6"/>
</svg>
<div class="a" style="left:820px;top:88px;width:1px;height:23px;background:#cfcfcf"></div>
<div class="t" style="left:835px;top:92px;font-size:17.8px;color:#333">top</div>
<svg class="a" style="left:1015px;top:94px" width="12" height="11" viewBox="0 0 12 11"><path d="M0.5 0.5 H11.5 L6 10.5Z" fill="#555"/></svg>
<div class="a" style="left:1040px;top:88px;width:1px;height:23px;background:#cfcfcf"></div>
<svg class="a" style="left:1055px;top:90px" width="27" height="20" viewBox="0 0 27 20">
 <path d="M1.5 10 Q13.5 -3 25.5 10 Q13.5 23 1.5 10Z" fill="#5a5a5a"/>
 <circle cx="13.5" cy="10" r="5" fill="#f3f3f3"/>
 <circle cx="13.5" cy="10" r="2.8" fill="#5a5a5a"/>
</svg>
<div class="a" style="left:1096px;top:88px;width:1px;height:23px;background:#cfcfcf"></div>
<div class="a" style="left:1107px;top:85px;width:53px;height:28px;background:#fff"></div>
<div class="t" style="left:1114px;top:92.5px;font-size:17.8px;color:#666">Filter</div>
<div class="t" style="left:1172px;top:92.5px;font-size:17.8px;color:#444;width:43px;overflow:hidden">Default</div>
<div class="a" style="left:1228px;top:88px;width:1px;height:23px;background:#cfcfcf"></div>
<svg class="a" style="left:1244px;top:88px" width="24" height="24" viewBox="0 0 24 24">
 <path fill="#5a5a5a" d="M19.4 13c.04-.32.1-.65.1-1s-.06-.68-.1-1l2.1-1.65c.2-.15.25-.42.13-.64l-2-3.46c-.12-.22-.4-.3-.6-.22l-2.5 1c-.52-.4-1.08-.73-1.7-.98l-.37-2.65A.49.49 0 0 0 14 3h-4c-.25 0-.46.18-.5.42l-.37 2.65c-.62.25-1.18.58-1.7.98l-2.5-1c-.22-.08-.48 0-.6.22l-2 3.46c-.13.22-.07.49.12.64L4.57 11c-.04.32-.07.65-.07 1s.03.68.07 1l-2.1 1.65c-.2.15-.25.42-.13.64l2 3.46c.12.22.4.3.6.22l2.5-1c.52.4 1.08.73 1.7.98l.37 2.65c.04.24.25.42.5.42h4c.25 0 .46-.18.5-.42l.37-2.65c.62-.25 1.18-.58 1.7-.98l2.5 1c.22.08.48 0 .6-.22l2-3.46c.12-.22.07-.49-.13-.64L19.4 13zM12 15.5A3.5 3.5 0 1 1 12 8.5a3.5 3.5 0 0 1 0 7z"/>
</svg>

<!-- console messages -->
<div class="mono" style="position:absolute;left:726px;top:120px;width:554px;font-size:18.2px;letter-spacing:-1px;line-height:19.5px">
 <div class="a" style="left:0;top:0;width:554px;height:68px;background:#fff"></div>
 <div class="a" style="left:37px;top:8px;color:#383838;white-space:pre">Angular is running in the
development mode. Call enableProdMode() to
enable the production mode.</div>
 <div class="a" style="left:382px;top:8px;color:#383838;text-decoration:underline;white-space:pre">core.js:16819</div>

 <div class="a" style="left:0;top:68px;width:554px;height:87px;background:#fffbe6;border-top:1px solid #f6ecc4"></div>
 <div class="a" style="left:0;top:154px;width:554px;height:89px;background:#fffbe6;border-top:1px solid #f3e6b8;border-bottom:1px solid #f3e6b8"></div>
 <div class="a" style="left:51px;top:75px;color:#4e4226;white-space:pre">Native: tried calling</div>
 <div class="a" style="left:37px;top:94.5px;color:#4e4226;white-space:pre">StatusBar.styleDefault, but Cordova is not
available. Make sure to include cordova.js or
run in a device/simulator</div>
 <div class="a" style="left:382px;top:75px;color:#4e4226;text-decoration:underline;white-space:pre">common.js:290</div>
 <div class="a" style="left:51px;top:162px;color:#4e4226;white-space:pre">Native: tried calling</div>
 <div class="a" style="left:37px;top:181.5px;color:#4e4226;white-space:pre">SplashScreen.hide, but Cordova is not available.
Make sure to include cordova.js or run in a
device/simulator</div>
 <div class="a" style="left:382px;top:162px;color:#4e4226;text-decoration:underline;white-space:pre">common.js:290</div>

 <div class="a" style="left:37px;top:250px;white-space:pre"><span style="color:#777">undefined</span> <span style="color:#383838">"</span><span style="color:#b41a1a">backdrop</span><span style="color:#383838">"</span></div>
 <div class="a" style="left:282.5px;top:250px;color:#383838;text-decoration:underline;white-space:pre">place-detail.page.ts:48</div>
 <div class="a" style="left:0;top:271px;width:554px;height:1px;background:#ececec"></div>
 <div class="a" style="left:37px;top:278px;white-space:pre"><span style="color:#777">null</span> <span style="color:#383838">"</span><span style="color:#b41a1a">cancel</span><span style="color:#383838">"</span></div>
 <div class="a" style="left:282.5px;top:278px;color:#383838;text-decoration:underline;white-space:pre">place-detail.page.ts:48</div>
 <div class="a" style="left:0;top:299px;width:554px;height:1px;background:#ececec"></div>
 <div class="a" style="left:37px;top:307px;white-space:pre"><span style="color:#777">null</span> <span style="color:#383838">"</span><span style="color:#b41a1a">cancel</span><span style="color:#383838">"</span></div>
 <div class="a" style="left:282.5px;top:307px;color:#383838;text-decoration:underline;white-space:pre">place-detail.page.ts:48</div>
 <div class="a" style="left:0;top:327px;width:554px;height:1px;background:#ececec"></div>
</div>
<svg class="a" style="left:739px;top:456px" width="11" height="13" viewBox="0 0 11 13"><path d="M2.5 2 L8 6.5 L2.5 11" fill="none" stroke="#3b74d8" stroke-width="2"/></svg>
<!-- warning icons -->
<svg class="a" style="left:736px;top:195px" width="17" height="16" viewBox="0 0 17 16">
 <path d="M8.5 1 Q9.3 1 9.8 1.8 L16 13.3 Q16.5 14.8 15 15 H2 Q0.5 14.8 1 13.3 L7.2 1.8 Q7.7 1 8.5 1Z" fill="#e9b52b"/>
 <rect x="7.6" y="4.8" width="1.8" height="5.6" fill="#fff"/><rect x="7.6" y="11.6" width="1.8" height="1.8" fill="#fff"/>
</svg>
<svg class="a" style="left:736px;top:282px" width="17" height="16" viewBox="0 0 17 16">
 <path d="M8.5 1 Q9.3 1 9.8 1.8 L16 13.3 Q16.5 14.8 15 15 H2 Q0.5 14.8 1 13.3 L7.2 1.8 Q7.7 1 8.5 1Z" fill="#e9b52b"/>
 <rect x="7.6" y="4.8" width="1.8" height="5.6" fill="#fff"/><rect x="7.6" y="11.6" width="1.8" height="1.8" fill="#fff"/>
</svg>
<svg class="a" style="left:765px;top:198px" width="9" height="12" viewBox="0 0 9 12"><path d="M1 1 L8 6 L1 11Z" fill="#555"/></svg>
<svg class="a" style="left:765px;top:285px" width="9" height="12" viewBox="0 0 9 12"><path d="M1 1 L8 6 L1 11Z" fill="#555"/></svg>

<!-- drawer -->
<div class="a" style="left:726px;top:573px;width:554px;height:1px;background:#cdcdcd"></div>
<div class="a" style="left:726px;top:574px;width:554px;height:40px;background:#f3f3f3"></div>
<div class="a" style="left:726px;top:614px;width:554px;height:1px;background:#cdcdcd"></div>
<div class="a" style="left:749px;top:585px;width:4px;height:4px;border-radius:50%;background:#555"></div>
<div class="a" style="left:749px;top:592px;width:4px;height:4px;border-radius:50%;background:#555"></div>
<div class="a" style="left:749px;top:600px;width:4px;height:4px;border-radius:50%;background:#555"></div>
<div class="t" style="left:783px;top:586px;font-size:17.8px;color:#444">Console</div>
<div class="t" style="left:879px;top:586px;font-size:17.8px;letter-spacing:0.2px;color:#444">What's New</div>
<div class="t" style="left:1020px;top:586px;font-size:17.8px;color:#333">Coverage</div>
<svg class="a" style="left:1106px;top:588px" width="12" height="12" viewBox="0 0 12 12"><path d="M1.5 1.5 L10.5 10.5 M10.5 1.5 L1.5 10.5" stroke="#555" stroke-width="1.8"/></svg>
<div class="a" style="left:1005px;top:612px;width:122px;height:3px;background:#2e97dd"></div>
<div class="t" style="left:1141px;top:586px;font-size:17.8px;color:#444">Search</div>
<svg class="a" style="left:1247px;top:586px" width="17" height="16" viewBox="0 0 17 16"><path d="M2 1.5 L15 14.5 M15 1.5 L2 14.5" stroke="#555" stroke-width="2.3"/></svg>

<div class="a" style="left:726px;top:654px;width:554px;height:1px;background:#cdcdcd"></div>
<div class="a" style="left:741px;top:625px;width:18px;height:18px;border-radius:50%;background:#5a5a5a"></div>
<svg class="a" style="left:782px;top:624px" width="21" height="21" viewBox="0 0 21 21">
 <path d="M18 11.2 A7.7 7.7 0 1 1 15.6 4.8" fill="none" stroke="#5a5a5a" stroke-width="2.7"/>
 <path d="M11.8 8.4 H19.4 V0.8Z" fill="#5a5a5a"/>
</svg>
<svg class="a" style="left:824px;top:624px" width="22" height="22" viewBox="0 0 22 22">
 <circle cx="11" cy="11" r="8.4" fill="none" stroke="#5a5a5a" stroke-width="2.7"/>
 <path d="M5.2 5.2 L16.8 16.8" stroke="#5a5a5a" stroke-width="2.6"/>
</svg>
<div class="a" style="left:862px;top:623px;width:1px;height:23px;background:#cfcfcf"></div>
<div class="t" style="left:879px;top:626px;font-size:17.8px;color:#b0b0b0">URL filter</div>
<div class="a" style="left:1064px;top:623px;width:1px;height:23px;background:#cfcfcf"></div>
<div class="a" style="left:1079px;top:626px;width:16px;height:16px;border-radius:3px;background:#e8e8e8;border:1px solid #aaa"></div>
<div class="t" style="left:1106px;top:626px;font-size:17.8px;letter-spacing:0.35px;color:#444">Content scripts</div>

<div class="a" style="left:726px;top:692px;width:554px;height:1px;background:#cdcdcd"></div>
<div class="a" style="left:726px;top:693px;width:554px;height:27px;background:#ececec"></div>
<svg class="a" style="left:1223px;top:695px" width="20" height="18" viewBox="0 0 20 18" style="overflow:visible">
 <g style="filter:drop-shadow(0.6px 1px 0.8px rgba(0,0,0,.28))">
 <path d="M6.5 1.5 Q3.5 6 3.5 11 Q3.5 16 7 16 Q10 16 11 11 L12 7 M12 7 Q11 13 13 15.5 Q15 16.5 17 14" fill="none" stroke="#fafafa" stroke-width="2.6" stroke-linecap="round"/>
 </g>
</svg>
<div class="t" style="left:1246px;top:701px;font-size:10.5px;letter-spacing:-0.2px;color:#f8f8f8;font-weight:bold;text-shadow:0.6px 1px 1px rgba(0,0,0,.28)">udemy</div>
<div class="a" style="left:725px;top:40px;width:2px;height:680px;background:#cecece"></div>
</body></html>
